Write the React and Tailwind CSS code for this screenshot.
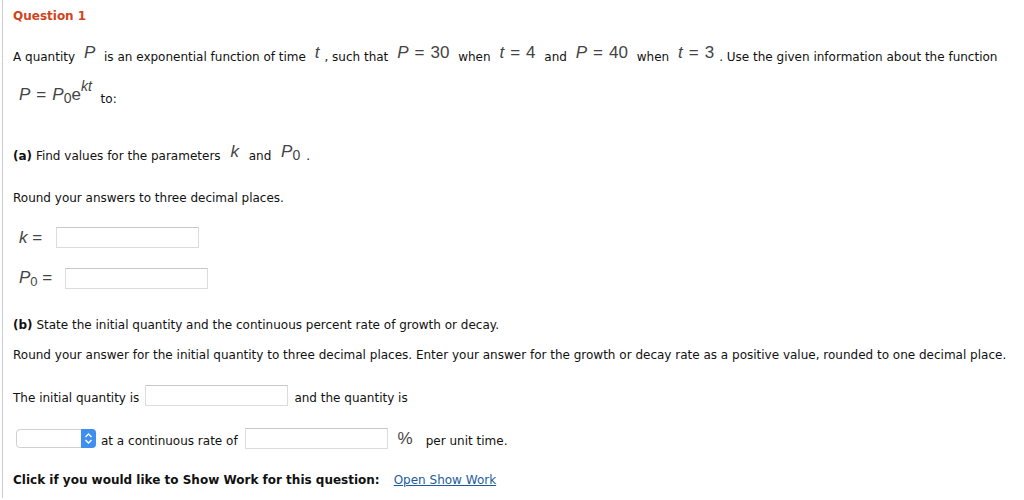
import React from "react";

// math bits are a lighter sans, set a little above the text baseline
function M({ children, className = "" }) {
  return (
    <span
      className={`inline-block px-[5px] align-[3px] text-[17px] leading-none text-[#444] ${className}`}
      style={{ fontFamily: '"Liberation Sans", Arial, sans-serif' }}
    >
      {children}
    </span>
  );
}

function I({ children }) {
  return <i className="italic">{children}</i>;
}

function Eq() {
  return <span className="mx-[6px]">=</span>;
}

function Box({ className = "" }) {
  return (
    <span
      className={`inline-block h-[21px] w-[143px] border border-[#dcdcdc] border-t-[#c8c8c8] bg-white align-middle ${className}`}
    />
  );
}

export default function App() {
  return (
    <div
      className="min-h-[500px] bg-white text-[12px] leading-[15px] text-[#111]"
      style={{ fontFamily: '"DejaVu Sans", Verdana, sans-serif' }}
    >
      <div className="ml-[2px] border-l border-[#c9ced6] pl-[10px] pt-[9px] pb-[10px]">
        <h1 className="text-[12px] font-bold text-[#d2431b]">Question 1</h1>

        {/* intro */}
        <p className="mt-[20px] whitespace-nowrap">
          A quantity <M><I>P</I></M> is an exponential function of time <M><I>t</I></M>, such that{" "}
          <M><I>P</I><Eq />30</M> when <M><I>t</I><Eq />4</M> and <M><I>P</I><Eq />40</M> when{" "}
          <M><I>t</I><Eq />3</M>. Use the given information about the function
        </p>
        <p className="mt-[14px]">
          <M className="pl-[6px]">
            <I>P</I><Eq /><I>P</I>
            <span className="text-[14px] align-[-3px]">0</span>e
            <span className="text-[14px] align-[9px]"><I>kt</I></span>
          </M>{" "}
          to:
        </p>

        {/* part a */}
        <p className="mt-[36px]">
          <b>(a)</b> Find values for the parameters <M className="px-[6px]"><I>k</I></M> and{" "}
          <M className="px-[6px]">
            <I>P</I>
            <span className="text-[14px] align-[-3px]">0</span>
          </M>
          .
        </p>
        <p className="mt-[27px]">Round your answers to three decimal places.</p>

        <div className="mt-[21px] flex items-center">
          <M className="pl-[6px] pr-[14px] align-baseline text-[15px]">
            <I>k</I> =
          </M>
          <Box />
        </div>
        <div className="mt-[20px] flex items-center">
          <M className="pl-[6px] pr-[13px] align-baseline text-[15px]">
            <I>P</I>
            <span className="text-[13px] align-[-3px]">0</span> =
          </M>
          <Box />
        </div>

        {/* part b */}
        <p className="mt-[29px]">
          <b>(b)</b> State the initial quantity and the continuous percent rate of growth or decay.
        </p>
        <p className="mt-[15px] whitespace-nowrap">
          Round your answer for the initial quantity to three decimal places. Enter your answer for the
          growth or decay rate as a positive value, rounded to one decimal place.
        </p>

        <div className="mt-[22px] flex items-center">
          <span className="mt-[6px]">The initial quantity is</span>
          <Box className="ml-[6px] mr-[6px]" />
          <span className="mt-[6px]">and the quantity is</span>
        </div>

        <div className="mt-[22px] flex items-center">
          <span className="ml-[3px] flex h-[19px] w-[80px] items-center justify-end rounded-[4px] border border-[#d0d0d0] bg-white">
            <span className="flex h-[19px] w-[15px] -mr-px items-center justify-center rounded-r-[4px] bg-[#3f8ff0]">
              <svg width="9" height="13" viewBox="0 0 9 13" fill="none" stroke="white" strokeWidth="1.4">
                <path d="M1.5 5 4.5 2 7.5 5" />
                <path d="M1.5 8 4.5 11 7.5 8" />
              </svg>
            </span>
          </span>
          <span className="ml-[5px] mt-[6px]">at a continuous rate of</span>
          <Box className="ml-[7px]" />
          <M className="ml-[5px] align-baseline">%</M>
          <span className="ml-[8px] mt-[6px]">per unit time.</span>
        </div>

        <p className="mt-[24px]">
          <b>Click if you would like to Show Work for this question:</b>
          <a href="#" className="ml-[14px] text-[#1d5c9c] underline">
            Open Show Work
          </a>
        </p>
      </div>
    </div>
  );
}
